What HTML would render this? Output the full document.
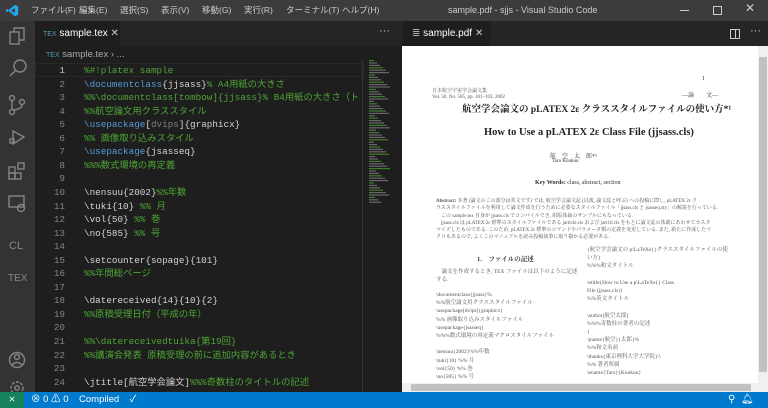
<!DOCTYPE html>
<html><head><meta charset="utf-8"><style>
*{margin:0;padding:0;box-sizing:border-box}
body{width:768px;height:408px;overflow:hidden;background:#1e1e1e;font-family:"Liberation Sans","Noto Sans CJK JP",sans-serif;position:relative}
.abs{position:absolute}
#title{left:0;top:0;width:768px;height:21px;background:#3c3c3c;color:#ccc;font-size:8.5px}
#title span{position:absolute;top:5px;white-space:nowrap;line-height:11px}
#act{left:0;top:21px;width:35px;height:371px;background:#333}
#tabs1{left:35px;top:21px;width:367px;height:25px;background:#252526}
#tabs2{left:402px;top:21px;width:366px;height:25px;background:#252526}
.tab{position:absolute;top:0;height:25px;background:#1e1e1e;color:#fff;font-size:10px;padding-top:7px;white-space:nowrap;line-height:11px}
#code{left:35px;top:46px;width:367px;height:346px;background:#1e1e1e;overflow:hidden}
.ln{position:absolute;left:0;width:30px;text-align:right;color:#858585;font-family:"Liberation Mono",monospace;font-size:9.3px;line-height:13px;height:13px}
.cl{position:absolute;left:49px;font-family:"Liberation Mono","Noto Sans CJK JP",monospace;font-size:9.3px;color:#d4d4d4;white-space:nowrap;line-height:13px;height:13px}
.g{color:#4ea636}.b{color:#569cd6}.d{color:#808080}
#mini{left:368px;top:60px;width:25px;height:150px}
#pdf{left:402px;top:46px;width:356px;height:337px;background:#fff;overflow:hidden;font-family:"Liberation Serif","Noto Serif CJK SC",serif;color:#333}
#status{left:0;top:392px;width:768px;height:16px;background:#007acc;color:#fff;font-size:9.5px}
.p{position:absolute;white-space:nowrap}
.ic{stroke:#858585;fill:none;stroke-width:1.4}
</style></head><body>
<div id="title" class="abs">
<svg class="abs" style="left:6px;top:4px" width="13" height="13" viewBox="0 0 16 16"><path d="M11 1 L15 3 V13 L11 15 L3 8.5 L1 10 L0 9 V7 L1 6 L3 7.5 Z M11 5 L6 8 L11 11 Z" fill="#23a9f2"/></svg>
<span style="left:31px">ファイル(F)</span><span style="left:79px">編集(E)</span><span style="left:120px">選択(S)</span><span style="left:161px">表示(V)</span><span style="left:202px">移動(G)</span><span style="left:244px">実行(R)</span><span style="left:286px">ターミナル(T)</span><span style="left:342px">ヘルプ(H)</span>
<span style="left:448px;font-size:9px">sample.pdf - sjjs - Visual Studio Code</span>
<div class="abs" style="left:680px;top:10px;width:9px;height:1px;background:#ccc"></div>
<div class="abs" style="left:713px;top:6px;width:9px;height:9px;border:1px solid #ccc"></div>
<span style="left:745px;top:3px;font-size:12px">✕</span>
</div>
<div id="act" class="abs">
<svg width="35" height="371" viewBox="0 0 35 371">
<g class="ic"><rect x="10" y="11" width="9" height="12"/><path d="M14 11 V7 H24 V19 H19"/>
<circle cx="20" cy="45" r="6"/><path d="M16 49 L10 55"/>
<circle cx="12" cy="77" r="2.5"/><circle cx="12" cy="91" r="2.5"/><circle cx="22" cy="81" r="2.5"/><path d="M12 80 V88 M22 84 Q22 88 13 89"/>
<path d="M13 110 L24 116 L13 123 Z"/><rect x="10" y="118" width="4" height="4"/>
<rect x="9" y="152" width="6" height="6"/><rect x="15" y="152" width="6" height="6"/><rect x="9" y="146" width="6" height="6"/><rect x="18" y="142" width="6" height="6"/>
<rect x="9" y="175" width="15" height="11"/><circle cx="21" cy="187" r="3.5"/>
<circle cx="17" cy="339" r="7.5"/><circle cx="17" cy="336" r="2.5"/><path d="M12 344 Q17 339 22 344"/></g>
<text x="9" y="228" fill="#858585" font-size="11" font-family="Liberation Sans">CL</text>
<text x="8" y="260" fill="#858585" font-size="10" font-family="Liberation Sans">TEX</text>
</svg>
<svg class="abs" style="left:7px;top:357px" width="20" height="20" viewBox="0 0 20 20"><circle cx="10" cy="10" r="6" class="ic" stroke-dasharray="3 1.5" stroke-width="2.5"/><circle cx="10" cy="10" r="2.2" class="ic"/></svg>
</div>
<div id="tabs1" class="abs"><div class="tab" style="left:0;width:85px;padding-left:8px"><span style="color:#519aba;font-size:7px">TEX</span> sample.tex <span style="color:#ccc">✕</span></div><span class="abs" style="right:12px;top:4px;color:#ccc;font-size:11px">···</span></div>
<div id="tabs2" class="abs"><div class="tab" style="left:0;width:88px;padding-left:10px"><span style="color:#aaa">≣</span> sample.pdf <span style="color:#ccc">✕</span></div>
<div class="abs" style="left:328px;top:8px;width:10px;height:10px;border:1px solid #ccc"></div><div class="abs" style="left:333px;top:8px;width:1px;height:10px;background:#ccc"></div>
<span class="abs" style="left:348px;top:4px;color:#ccc;font-size:11px">···</span></div>
<div id="code" class="abs">
<div class="p" style="left:11px;top:3px;color:#aaa;font-size:9.5px;line-height:11px"><span style="color:#519aba;font-size:7px">TEX</span> sample.tex › ...</div>
<div class="abs" style="left:0;top:17px;width:329px;height:14px;border:1px solid #282828"></div>
<div class="abs" style="left:327px;top:14px;width:1px;height:332px;background:#333"></div>
<div id="L"></div>
</div>
<svg id="mini" class="abs" width="25" height="150"></svg>
<div id="pdf" class="abs">
<div class="p" style="left:300px;top:30px;font-size:6px">1</div>
<div class="p" style="left:30px;top:43px;font-size:5px;line-height:6px;color:#555">日本航空宇宙学会論文集<br>Vol. 50, No. 585, pp. 101–103, 2002</div>
<div class="p" style="left:280px;top:44px;font-size:6px">—論　　文—</div>
<div class="p" style="left:60px;top:58px;font-size:9.5px;font-weight:bold;color:#222;line-height:12px">航空学会論文の pLATEX 2ε クラススタイルファイルの使い方*¹</div>
<div class="p" style="left:82px;top:81px;font-size:10.5px;font-weight:bold;color:#222;line-height:12px">How to Use a pLATEX 2ε Class File (jjsass.cls)</div>
<div class="p" style="left:148px;top:105px;font-size:6px">航　空　太　郎*²</div>
<div class="p" style="left:150px;top:113px;font-size:5px">Taro Koukuu</div>
<div class="p" style="left:133px;top:134px;font-size:6px"><b>Key Words:</b> class, abstract, section</div>
<div class="p" style="left:34px;top:152px;font-size:5px;line-height:7.3px;color:#555"><b>Abstract:</b> 本著 (論文のこの部分は英文です) では, 航空学会論文誌 (以後, 論文誌と呼ぶ) への投稿に際し, pLATEX 2ε ク<br>ラススタイルファイルを利用して論文作成を行うために必要なスタイルファイル「jjsass.cls と jsasseq.sty」の解説を行っている.<br>　この sample.tex 自身が jjsass.cls でコンパイルでき, 組版体裁のサンプルにもなっている.<br>　jjsass.cls は pLATEX 2ε 標準のスタイルファイルである jarticle.cls および jart10.cls をもとに論文誌の体裁にあわせてカスタ<br>マイズしたものである. このため, pLATEX 2ε 標準のコマンドやパラメータ類の定義を変更している. また, 新たに作成したマ<br>クロもあるので, よくこのマニュアルを読み投稿執筆に取り掛かる必要がある.</div>
<div class="p" style="left:75px;top:208px;font-size:6.5px;font-weight:bold">1.　ファイルの記述</div>
<div class="p" style="left:34px;top:222px;font-size:5.5px;line-height:8px;color:#555">　論文を作成するとき, TEX ファイルは以下のように記述<br>する.</div>
<div class="p" style="left:34px;top:245px;font-size:5.5px;line-height:8.2px;color:#555">\documentclass{jjsass}%<br>%%航空論文用クラススタイルファイル<br>\usepackage[dvips]{graphicx}<br>%% 画像取り込みスタイルファイル<br>\usepackage{jsasseq}<br>%%%数式環境の再定義マクロスタイルファイル<br><br>\nensuu{2002}%%年数<br>\tuki{10}  %% 月<br>\vol{50}   %% 巻<br>\no{585}   %% 号</div>
<div class="p" style="left:185px;top:200px;font-size:5.5px;line-height:8.2px;color:#555">{航空学会論文の p\LaTeXe{}クラススタイルファイルの使<br>い方}<br>%%%和文タイトル<br><br>\etitle{How to Use a p\LaTeXe{} Class<br>File (jjsass.cls)}<br>%%英文タイトル<br><br>\author[航空太郎]<br>%%%奇数柱の著者の記述<br>{<br>\jname{航空}{太郎}%<br>%%和文名前<br>\thanks{東京理科大学大学院}\\<br>%% 著者所属<br>\ename{Taro}{Koukuu}</div>
</div>
<div class="abs" style="left:758px;top:46px;width:10px;height:337px;background:#f0f0f0"><div class="abs" style="left:1px;top:11px;width:8px;height:315px;background:#c1c1c1"></div></div>
<div class="abs" style="left:402px;top:383px;width:366px;height:9px;background:#f0f0f0"><div class="abs" style="left:9px;top:1px;width:340px;height:7px;background:#c1c1c1"></div></div>
<div id="status" class="abs">
<div class="abs" style="left:0;top:0;width:24px;height:16px;background:#16825d;text-align:center;font-size:9px;padding-top:2px">⨯</div>
<div class="p" style="left:31px;top:2px;line-height:12px">⊗ 0 ⚠ 0 &nbsp;&nbsp; Compiled &nbsp;&nbsp; ✓</div>
<div class="p" style="left:728px;top:1px;font-size:10px;line-height:13px">⚲ &nbsp;🔔︎</div>
</div>
<script>
var lines=[
'<span class="g">%#!platex sample</span>',
'<span class="b">\\documentclass</span>{jjsass}<span class="g">% A4用紙の大きさ</span>',
'<span class="g">%%\\documentclass[tombow]{jjsass}% B4用紙の大きさ（ト</span>',
'<span class="g">%%航空論文用クラススタイル</span>',
'<span class="b">\\usepackage</span>[<span class="d">dvips</span>]{graphicx}',
'<span class="g">%% 画像取り込みスタイル</span>',
'<span class="b">\\usepackage</span>{jsasseq}',
'<span class="g">%%%数式環境の再定義</span>',
'',
'\\nensuu{2002}<span class="g">%%年数</span>',
'\\tuki{10} <span class="g">%% 月</span>',
'\\vol{50}  <span class="g">%% 巻</span>',
'\\no{585}  <span class="g">%% 号</span>',
'',
'\\setcounter{sopage}{101}',
'<span class="g">%%年間総ページ</span>',
'',
'\\datereceived{14}{10}{2}',
'<span class="g">%%原稿受理日付（平成の年）</span>',
'',
'<span class="g">%%\\datereceivedtuika{第19回}</span>',
'<span class="g">%%講演会発表 原稿受理の前に追加内容があるとき</span>',
'',
'\\jtitle[航空学会論文]<span class="g">%%%奇数柱のタイトルの記述</span>'];
var h='';
for(var i=0;i<lines.length;i++){var y=18+i*13.55;
h+='<div class="ln" style="top:'+y+'px;'+(i==0?'color:#c6c6c6':'')+'">'+(i+1)+'</div><div class="cl" style="top:'+y+'px">'+lines[i]+'</div>';}
document.getElementById('L').innerHTML=h;
var m='';for(var j=0;j<60;j++){var w=5+((j*37)%17);m+='<rect x="1" y="'+(j*2.4)+'" width="'+w+'" height="1.2" fill="'+(j%3==0?'#4ea636':'#888')+'" opacity="0.7"/>';}
document.getElementById('mini').innerHTML=m;
</script>
</body></html>
